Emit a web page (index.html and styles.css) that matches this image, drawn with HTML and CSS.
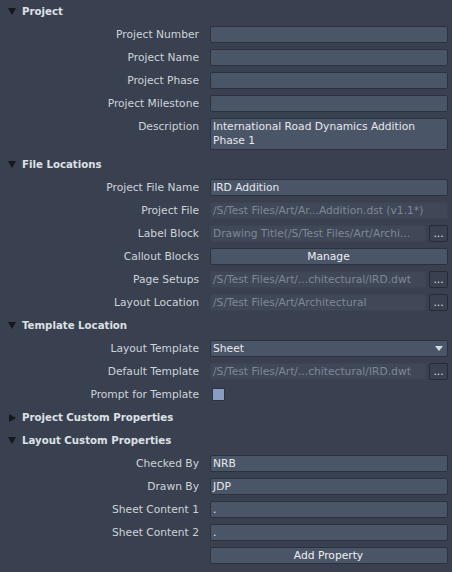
FILE: index.html
```html
<!DOCTYPE html>
<html lang="en">
<head>
    <meta charset="UTF-8">
    <title>Project Properties</title>
    <link rel="stylesheet" href="styles.css">
</head>
<body>
    <div class="panel">
        <div class="section-header"><span class="arrow down"></span>Project</div>
        <div class="row"><label>Project Number</label><div class="field"></div></div>
        <div class="row"><label>Project Name</label><div class="field"></div></div>
        <div class="row"><label>Project Phase</label><div class="field"></div></div>
        <div class="row"><label>Project Milestone</label><div class="field"></div></div>
        <div class="row tall"><label>Description</label><div class="field multi">International Road Dynamics Addition Phase 1</div></div>

        <div class="section-header"><span class="arrow down"></span>File Locations</div>
        <div class="row"><label>Project File Name</label><div class="field">IRD Addition</div></div>
        <div class="row"><label>Project File</label><div class="field disabled">/S/Test Files/Art/Ar...Addition.dst (v1.1*)</div></div>
        <div class="row"><label>Label Block</label>
            <div class="with-btn"><div class="field disabled">Drawing Title(/S/Test Files/Art/Archi...</div><button class="dots">...</button></div>
        </div>
        <div class="row"><label>Callout Blocks</label><button class="field button">Manage</button></div>
        <div class="row"><label>Page Setups</label>
            <div class="with-btn"><div class="field disabled">/S/Test Files/Art/...chitectural/IRD.dwt</div><button class="dots">...</button></div>
        </div>
        <div class="row"><label>Layout Location</label>
            <div class="with-btn"><div class="field disabled">/S/Test Files/Art/Architectural</div><button class="dots">...</button></div>
        </div>

        <div class="section-header"><span class="arrow down"></span>Template Location</div>
        <div class="row"><label>Layout Template</label><div class="field select">Sheet<span class="caret"></span></div></div>
        <div class="row"><label>Default Template</label>
            <div class="with-btn"><div class="field disabled">/S/Test Files/Art/...chitectural/IRD.dwt</div><button class="dots">...</button></div>
        </div>
        <div class="row"><label>Prompt for Template</label><div class="check-wrap"><span class="checkbox"></span></div></div>

        <div class="section-header"><span class="arrow right"></span>Project Custom Properties</div>
        <div class="section-header"><span class="arrow down"></span>Layout Custom Properties</div>
        <div class="row"><label>Checked By</label><div class="field">NRB</div></div>
        <div class="row"><label>Drawn By</label><div class="field">JDP</div></div>
        <div class="row"><label>Sheet Content 1</label><div class="field">.</div></div>
        <div class="row"><label>Sheet Content 2</label><div class="field">.</div></div>
        <div class="row"><label></label><button class="field button">Add Property</button></div>
    </div>
</body>
</html>
```

FILE: styles.css
```css
* {
    margin: 0;
    padding: 0;
    box-sizing: border-box;
    font-family: "DejaVu Sans", Verdana, sans-serif;
}

body {
    background-color: #394150;
    color: #d3d7de;
    font-size: 10.7px;
    min-height: 100vh;
}

.panel {
    padding-right: 4px;
}

.section-header {
    height: 23px;
    display: flex;
    align-items: center;
    padding-left: 8px;
    font-weight: bold;
    font-size: 10.2px;
    color: #dde0e5;
}

.arrow {
    display: inline-block;
    width: 0;
    height: 0;
    margin-right: 6px;
}

.arrow.down {
    border-left: 4px solid transparent;
    border-right: 4px solid transparent;
    border-top: 7px solid #15181d;
}

.arrow.right {
    border-top: 4px solid transparent;
    border-bottom: 4px solid transparent;
    border-left: 7px solid #15181d;
    margin-left: 1px;
}

.row {
    display: grid;
    grid-template-columns: 199px 1fr;
    column-gap: 11px;
    align-items: center;
    height: 23px;
}

.row label {
    text-align: right;
    color: #cfd3da;
}

.row.tall {
    height: 38px;
    align-items: start;
    padding-top: 3px;
}

.row.tall label {
    padding-top: 2px;
}

.field {
    height: 17px;
    line-height: 15px;
    background-color: #4b5568;
    border: 1px solid #2b323d;
    border-radius: 2px;
    padding: 0 3px 0 2px;
    color: #e6e8ec;
    white-space: nowrap;
    overflow: hidden;
    font-size: 10.7px;
}

.field.multi {
    height: 32px;
    line-height: 14px;
    padding-top: 1px;
    white-space: normal;
}

.field.disabled {
    background-color: #404858;
    border-color: #3c4453;
    color: #7f8796;
}

.field.button {
    text-align: center;
    width: 100%;
    color: #eef0f3;
    cursor: pointer;
}

.field.select {
    position: relative;
}

.caret {
    position: absolute;
    right: 4px;
    top: 5px;
    border-left: 4px solid transparent;
    border-right: 4px solid transparent;
    border-top: 5px solid #d8dce2;
}

.with-btn {
    display: flex;
    gap: 3px;
}

.with-btn .field {
    flex: 1;
}

.dots {
    width: 19px;
    height: 17px;
    background-color: #394150;
    border: 1px solid #262c36;
    border-radius: 2px;
    color: #dfe2e7;
    font-size: 10.7px;
    line-height: 13px;
}

.check-wrap {
    display: flex;
    align-items: center;
    padding-left: 2px;
}

.checkbox {
    width: 13px;
    height: 13px;
    background-color: #8a9cc0;
    border: 1px solid #2b323d;
    border-radius: 1px;
}
```
